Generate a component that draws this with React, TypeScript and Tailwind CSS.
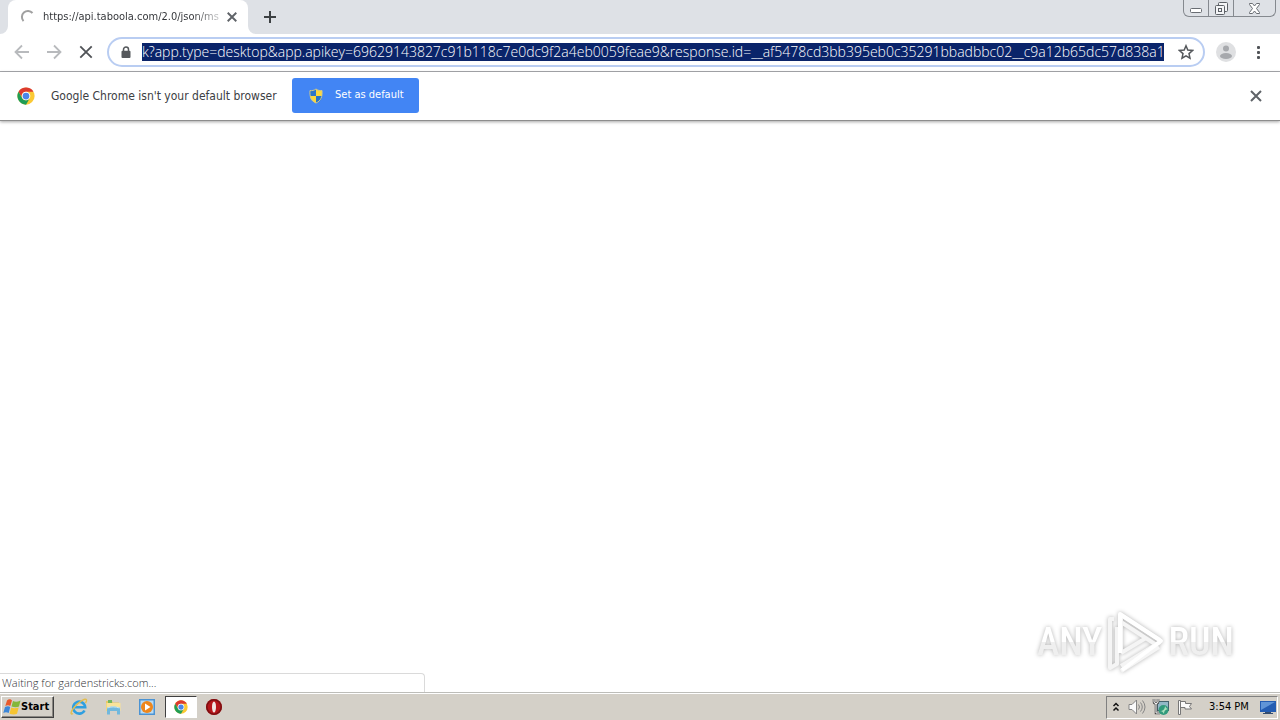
import React from "react";

const REQUEST_URL =
  "k?app.type=desktop&app.apikey=69629143827c91b118c7e0dc9f2a4eb0059feae9&response.id=__af5478cd3bb395eb0c35291bbadbbc02__c9a12b65dc57d838a1";

function CrossIcon({ className }: { className: string }) {
  return (
    <svg viewBox="0 0 14 14" className={className} fill="none" stroke="currentColor" aria-hidden="true">
      <path d="M2 2l10 10M12 2L2 12" />
    </svg>
  );
}

function ChromeIcon({ className }: { className: string }) {
  return (
    <svg viewBox="0 0 48 48" className={className} aria-hidden="true">
      <circle cx="24" cy="24" r="23" fill="#fbc934" />
      <path d="M4.1 12.5A23 23 0 0 1 43.9 12.5H24a11.500 11.500 0 0 0-10 17.250z" fill="#dc3a2f" />
      <path d="M4.1 12.500L14 29.750A11.500 11.500 0 0 0 34 29.750L24 47A23 23 0 0 1 4.1 12.500z" fill="#1f9d55" />
      <circle cx="24" cy="24" r="11.500" fill="#fff" />
      <circle cx="24" cy="24" r="9" fill="#4a86e8" />
    </svg>
  );
}

function TabStrip() {
  return (
    <header className="flex h-[34px] items-start justify-between bg-[#dee1e6]">
      <div className="flex h-full items-end">
        <svg viewBox="0 0 8 8" className="size-2" aria-hidden="true">
          <path d="M8 0v8H0a8 8 0 0 0 8-8z" fill="#fff" />
        </svg>
        <div className="flex h-full w-60 items-center rounded-t-lg bg-white pl-3 pr-[10px]">
          <svg viewBox="0 0 16 16" className="size-4 shrink-0" fill="none" stroke="#a0a0a0" strokeWidth="2" aria-hidden="true">
            <path d="M3.500 12.200A6 6 0 0 1 12.500 4" />
          </svg>
          <span className="ml-[7px] w-[176px] whitespace-nowrap bg-linear-to-r from-[#303236] from-85% to-[#30323640] bg-clip-text font-['DejaVu_Sans_Condensed','DejaVu_Sans',sans-serif] text-[11px] leading-4 text-transparent">
            https://api.taboola.com/2.0/json/ms
          </span>
          <button aria-label="Close tab" className="ml-auto text-[#5f6368]">
            <CrossIcon className="size-3 stroke-[2.2]" />
          </button>
        </div>
        <svg viewBox="0 0 8 8" className="size-2" aria-hidden="true">
          <path d="M0 0v8h8a8 8 0 0 1-8-8z" fill="#fff" />
        </svg>
        <button aria-label="New tab" className="ml-2 flex h-full items-center">
          <svg viewBox="0 0 12 12" className="size-3" stroke="#3c4043" strokeWidth="2" aria-hidden="true">
            <path d="M6 0v12M0 6h12" />
          </svg>
        </button>
      </div>
      <div className="mr-1 flex h-[17px] overflow-hidden rounded-b-md border border-t-0 border-[#85898f]">
        <button aria-label="Minimize" className="flex w-6 items-center justify-center pt-1">
          <svg viewBox="0 0 12 5" className="h-[5px] w-3" aria-hidden="true">
            <rect x=".5" y=".5" width="11" height="4" rx="1" fill="#fff" stroke="#696d73" />
          </svg>
        </button>
        <button aria-label="Restore" className="flex w-[26px] items-center justify-center border-x border-[#85898f]">
          <svg viewBox="0 0 13 13" className="size-[13px]" fill="#f4f5f7" stroke="#5c6066" aria-hidden="true">
            <rect x="3.500" y=".5" width="9" height="9" rx="1" />
            <rect x=".5" y="3.500" width="9" height="9" rx="1" />
            <rect x="3.500" y="6.500" width="3" height="3" />
          </svg>
        </button>
        <button aria-label="Close window" className="flex w-[41px] items-center justify-center">
          <svg viewBox="0 0 13 11" className="h-[11px] w-[13px]" fill="#fff" stroke="#696d73" aria-hidden="true">
            <path d="M1.500.5h3l2 2.500 2-2.500h3v1L8.500 5.500l3 4v1h-3l-2-2.500-2 2.500h-3v-1l3-4-3-4z" />
          </svg>
        </button>
      </div>
    </header>
  );
}

function Toolbar() {
  return (
    <div className="flex h-[38px] items-center border-b border-[#a9abaf] bg-white px-[14px] pb-px">
      <div className="flex gap-4">
        <button aria-label="Back" className="text-[#b8babd]">
          <svg viewBox="0 0 16 16" className="size-4" fill="none" stroke="currentColor" strokeWidth="1.800" aria-hidden="true">
            <path d="M15 8H2M8 1.500L1.500 8 8 14.500" />
          </svg>
        </button>
        <button aria-label="Forward" className="text-[#b8babd]">
          <svg viewBox="0 0 16 16" className="size-4" fill="none" stroke="currentColor" strokeWidth="1.800" aria-hidden="true">
            <path d="M1 8h13M8 1.500L14.500 8 8 14.500" />
          </svg>
        </button>
        <button aria-label="Stop loading" className="text-[#505357]">
          <CrossIcon className="size-4 stroke-[1.600]" />
        </button>
      </div>
      <div className="ml-[13px] flex h-[30px] min-w-0 flex-1 items-center rounded-full border-2 border-[#b9cdf2] bg-white pl-3 pr-[9px]">
        <svg viewBox="0 0 10 13" className="h-[13px] w-[10px] shrink-0" aria-hidden="true">
          <path d="M2.500 5.500V3.500a2.500 2.500 0 0 1 5 0v2" fill="none" stroke="#55585c" strokeWidth="1.500" />
          <rect x=".5" y="4.800" width="9" height="7.200" rx="1" fill="#55585c" />
        </svg>
        <input
          aria-label="Address"
          readOnly
          value={REQUEST_URL}
          className="ml-[11px] h-[18px] min-w-0 flex-1 bg-[#0a246a] text-[14px] leading-[18px] font-light text-white outline-none"
        />
        <button aria-label="Bookmark this page" className="ml-[14px] shrink-0">
          <svg viewBox="0 0 16 16" className="size-4" fill="none" stroke="#55585c" strokeWidth="1.500" aria-hidden="true">
            <path d="M8 1.800l1.800 4.300 4.700.4-3.500 3.100 1 4.600L8 11.800l-4 2.400 1-4.600L1.500 6.500l4.700-.4z" />
          </svg>
        </button>
      </div>
      <button aria-label="Profile" className="ml-[11px]">
        <svg viewBox="0 0 20 20" className="size-5" aria-hidden="true">
          <circle cx="10" cy="10" r="10" fill="#dfe0e2" />
          <circle cx="10" cy="6.500" r="3" fill="#a7a9ad" />
          <ellipse cx="10" cy="14" rx="6" ry="3" fill="#a7a9ad" />
        </svg>
      </button>
      <button aria-label="Menu" className="ml-[14px]">
        <svg viewBox="0 0 16 16" className="size-4" fill="#505357" aria-hidden="true">
          <rect x="7" y="2" width="3" height="3" rx="1" />
          <rect x="7" y="7" width="3" height="3" rx="1" />
          <rect x="7" y="12" width="3" height="3" rx="1" />
        </svg>
      </button>
    </div>
  );
}

function ShieldIcon() {
  return (
    <svg viewBox="0 0 14 16" className="h-4 w-[14px]" aria-hidden="true">
      <path d="M7 1C5 2.500 3 2.800 1 2.500V8h6z" fill="#2d76c9" />
      <path d="M7 1c2 1.500 4 1.800 6 1.500V8H7z" fill="#fbd83e" />
      <path d="M1 8h6v7C3.500 13.500 1.500 12 1 8z" fill="#fbd83e" />
      <path d="M7 8h6c-.5 4-2.500 6-6 7z" fill="#2873c6" />
      <path d="M7 1C5 2.500 3 2.800 1 2.500.5 8.500 2 13 7 15c5-2 6.500-6.500 6-12.500C11 2.800 9 2.500 7 1z" fill="none" stroke="#cfc98a" />
    </svg>
  );
}

function DefaultBrowserBar() {
  return (
    <div className="z-10 flex h-[49px] items-center border-b border-[#8d8d8d] bg-white px-[17px] pb-px font-['DejaVu_Sans_Condensed','DejaVu_Sans',sans-serif] shadow-[0_1px_3px_rgba(0,0,0,0.35)]">
      <ChromeIcon className="size-[18px]" />
      <p className="ml-4 w-[228px] whitespace-nowrap text-[12px] leading-5 text-[#3c4043]">
        Google Chrome isn't your default browser
      </p>
      <button className="ml-[13px] flex h-[35px] w-[127px] items-center rounded-[3px] bg-[#4285f4] pl-[17px] text-[11px] text-white">
        <ShieldIcon />
        <span className="ml-3 whitespace-nowrap">Set as default</span>
      </button>
      <button aria-label="Dismiss" className="ml-auto text-[#5f6368]">
        <CrossIcon className="size-[14px] stroke-[2]" />
      </button>
    </div>
  );
}

function Watermark() {
  return (
    <div className="flex items-center font-['Roboto_Condensed','Liberation_Sans_Narrow',sans-serif] text-[38px] leading-none font-medium drop-shadow-[0_0_2px_rgba(0,0,0,0.3)]">
      <span className="bg-linear-to-b from-white from-50% to-[#efefef] to-50% bg-clip-text text-transparent">ANY</span>
      <svg viewBox="0 0 60 64" className="ml-1 h-16 w-[60px]" fill="none" strokeWidth="4" strokeLinejoin="round" aria-hidden="true">
        <path d="M15 43V5l39 25M15 12l37 24M8 9H4v49l7-4V17M15 43l25-15M15 56l39-24M15 61l38-24" stroke="#f5f5f5" />
        <path d="M14 43V4l41 27-39 29" stroke="#fff" />
      </svg>
      <span className="ml-[2px] bg-linear-to-b from-white from-50% to-[#efefef] to-50% bg-clip-text text-transparent">RUN</span>
    </div>
  );
}

function WindowsFlag() {
  return (
    <svg viewBox="0 0 18 18" className="size-[18px] shrink-0" aria-hidden="true">
      <path d="M4 2.500c2-2 4-1 5 0L7.300 8C6 7 4 7 2.300 8z" fill="#e7592b" />
      <path d="M10 3c2 1 4.500 1 7.500-.5L16 8.500c-2 1-4.500 1-7.500 0z" fill="#83b73a" />
      <path d="M2 9c2-1 4-1 5.200 0l-1.500 6C4 14 2 14 .3 15z" fill="#3b86d8" />
      <path d="M8.200 9.500c2 1 4.500 1 7.500 0L14 15.700c-2 1-4.500 1-7.500 0z" fill="#f5c431" />
    </svg>
  );
}

function IeIcon() {
  return (
    <svg viewBox="0 0 18 18" className="size-[18px]" fill="none" aria-hidden="true">
      <path d="M14.500 12.500a6 6 0 1 1 .7-3.200H5" stroke="#2f9fe0" strokeWidth="2.600" />
      <path d="M3 15.500c-3 2-2.500-2 1.500-6.500C9 4 15.500-.5 16.500 1.800c.4 1-.3 2.200-1 3.200" stroke="#e3bd4e" strokeWidth="1.400" />
    </svg>
  );
}

function FolderIcon() {
  return (
    <svg viewBox="0 0 18 18" className="size-[18px]" aria-hidden="true">
      <path d="M2 3h6l1 1.500h6V13H2z" fill="#e8c964" />
      <path d="M4 2h4v3H4z" fill="#72b65e" />
      <path d="M2.500 5h14v8h-14z" fill="#f8e39a" />
      <path d="M3 10c3-2 9-2 13 0v6.500h-3V13H6v3.500H3z" fill="#71b8dd" />
      <path d="M3.500 10c3-1.500 8-1.500 12 0" fill="none" stroke="#c5e7f6" />
    </svg>
  );
}

function MediaIcon() {
  return (
    <svg viewBox="0 0 18 18" className="size-[18px]" aria-hidden="true">
      <rect x="1" y="1" width="16" height="16" fill="#4b93d3" />
      <rect x="2.500" y="2.500" width="13" height="13" fill="#b9dbf3" />
      <circle cx="9" cy="9" r="6" fill="#ee861b" />
      <path d="M7 5.500v7L12.500 9z" fill="#fff" />
    </svg>
  );
}

function OperaIcon() {
  return (
    <svg viewBox="0 0 18 18" className="size-[18px]" aria-hidden="true">
      <circle cx="9" cy="9" r="8" fill="#b5151a" />
      <circle cx="9" cy="9" r="7.200" fill="none" stroke="#7a1012" strokeWidth="1.500" />
      <ellipse cx="9" cy="9" rx="2" ry="5.500" fill="#f1e5e2" />
    </svg>
  );
}

function Tray() {
  return (
    <div className="flex h-[23px] items-center border border-b-white border-l-[#808080] border-r-white border-t-[#808080] pl-[5px]">
      <button aria-label="Show hidden icons">
        <svg viewBox="0 0 8 10" className="h-[10px] w-2" fill="none" stroke="#111" strokeWidth="1.500" aria-hidden="true">
          <path d="M1.500 4L4 1.500 6.500 4M1.500 8.500L4 6l2.500 2.500" />
        </svg>
      </button>
      <button aria-label="Volume" className="ml-2">
        <svg viewBox="0 0 18 16" className="h-4 w-[18px]" fill="none" stroke="#858585" aria-hidden="true">
          <path d="M1 5.500h3L8.500 1v14L4 10.500H1z" fill="#fafafa" />
          <path d="M10.500 5.500q2 2.500 0 5M12.500 3.500q3.500 4.500 0 9M14.500 1.500q5 6.500 0 13" />
        </svg>
      </button>
      <button aria-label="Network" className="ml-[6px]">
        <svg viewBox="0 0 18 18" className="size-[18px]" aria-hidden="true">
          <rect x="5.500" y="3.500" width="11" height="9" fill="#92b8c7" stroke="#45636e" />
          <path d="M2 1v3c0 2 4 2 4 0V1M4 5v10h4" fill="none" stroke="#454545" strokeWidth="2.500" />
          <path d="M2 1v3c0 2 4 2 4 0V1M4 5v10h4" fill="none" stroke="#fff" />
          <circle cx="11.500" cy="12" r="5" fill="#319a7c" />
          <path d="M8 13c3 0 5-2 5-5 1 2 2 3 3 3-3 1-4 2-4 5-1-2-2-3-4-3z" fill="#a9dfbc" />
        </svg>
      </button>
      <button aria-label="Action center" className="ml-[6px]">
        <svg viewBox="0 0 18 16" className="h-4 w-[18px]" fill="#fafafa" stroke="#777" aria-hidden="true">
          <path d="M4.500 2.500h5v2h6l-2 3 2 2.500H9V8.500H4.500z" />
          <path d="M2.500 1.500h2v14h-2z" />
        </svg>
      </button>
      <time className="ml-[15px] w-10 whitespace-nowrap font-['DejaVu_Sans_Condensed','DejaVu_Sans',sans-serif] text-[11px] leading-4 text-black">
        3:54 PM
      </time>
      <button aria-label="Show desktop" className="ml-[11px] pr-px">
        <svg viewBox="0 0 16 15" className="h-[15px] w-4" aria-hidden="true">
          <path d="M0 1h16v11H0z" fill="#245db2" />
          <path d="M1 2h14L1 10z" fill="#6095d7" />
          <path d="M5 12h6v1H5zM3 13h10v1H3z" fill="#344d70" />
        </svg>
      </button>
    </div>
  );
}

function Taskbar() {
  return (
    <footer className="border-t border-[#bdbdb9] bg-[#d4d0c8]">
      <div className="flex h-[27px] items-center justify-between border-t border-white pl-px pr-[2px]">
        <div className="flex items-center">
          <button className="flex h-[22px] w-[53px] items-center border border-b-[#404040] border-l-white border-r-[#404040] border-t-white pl-px font-['DejaVu_Sans_Condensed','DejaVu_Sans',sans-serif] text-[11px] font-bold text-black shadow-[inset_-1px_-1px_0_#8a8782]">
            <WindowsFlag />
            Start
          </button>
          <nav aria-label="Taskbar programs" className="ml-4 flex items-center">
            <button aria-label="Internet Explorer" className="flex w-[34px] items-center"><IeIcon /></button>
            <button aria-label="File Explorer" className="flex w-[34px] items-center"><FolderIcon /></button>
            <button aria-label="Media Player" className="flex w-[27px] items-center"><MediaIcon /></button>
            <button
              aria-label="Google Chrome"
              className="flex h-[22px] w-8 items-center justify-center border border-b-white border-l-[#404040] border-r-white border-t-[#404040] bg-white"
            >
              <ChromeIcon className="size-[14px]" />
            </button>
            <button aria-label="Opera" className="ml-2 flex items-center"><OperaIcon /></button>
          </nav>
        </div>
        <Tray />
      </div>
    </footer>
  );
}

export default function App() {
  return (
    <div className="flex min-h-screen flex-col bg-white font-['Open_Sans','Noto_Sans',sans-serif]">
      <TabStrip />
      <Toolbar />
      <DefaultBrowserBar />
      <main className="relative flex flex-1 items-end justify-end pb-[18px] pr-[46px]">
        <Watermark />
        <p className="absolute bottom-0 left-0 h-[19px] w-[425px] rounded-tr-[4px] border-r border-t border-[#dadada] pl-[2px] text-[11px] leading-[18px] font-light text-[#303236]">
          Waiting for gardenstricks.com...
        </p>
      </main>
      <Taskbar />
    </div>
  );
}
